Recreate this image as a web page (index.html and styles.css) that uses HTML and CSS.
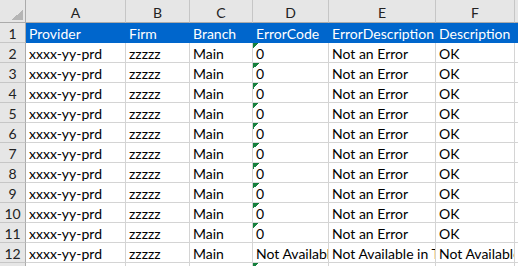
FILE: index.html
```html
<!DOCTYPE html>
<html>
<head>
<meta charset="utf-8">
<link rel="stylesheet" href="styles.css">
</head>
<body>
<div class="sheet">
  <div class="corner"></div>
  <div class="ch">A</div><div class="ch">B</div><div class="ch">C</div><div class="ch">D</div><div class="ch">E</div><div class="ch">F</div><div class="ch last"></div>

  <div class="rh">1</div>
  <div class="c hd">Provider</div><div class="c hd">Firm</div><div class="c hd">Branch</div><div class="c hd">ErrorCode</div><div class="c hd">ErrorDescription</div><div class="c hd">Description</div><div class="c hd last"></div>

  <div class="rh">2</div><div class="c">xxxx-yy-prd</div><div class="c">zzzzz</div><div class="c">Main</div><div class="c tri">0</div><div class="c">Not an Error</div><div class="c">OK</div><div class="c last"></div>
  <div class="rh">3</div><div class="c">xxxx-yy-prd</div><div class="c">zzzzz</div><div class="c">Main</div><div class="c tri">0</div><div class="c">Not an Error</div><div class="c">OK</div><div class="c last"></div>
  <div class="rh">4</div><div class="c">xxxx-yy-prd</div><div class="c">zzzzz</div><div class="c">Main</div><div class="c tri">0</div><div class="c">Not an Error</div><div class="c">OK</div><div class="c last"></div>
  <div class="rh">5</div><div class="c">xxxx-yy-prd</div><div class="c">zzzzz</div><div class="c">Main</div><div class="c tri">0</div><div class="c">Not an Error</div><div class="c">OK</div><div class="c last"></div>
  <div class="rh">6</div><div class="c">xxxx-yy-prd</div><div class="c">zzzzz</div><div class="c">Main</div><div class="c tri">0</div><div class="c">Not an Error</div><div class="c">OK</div><div class="c last"></div>
  <div class="rh">7</div><div class="c">xxxx-yy-prd</div><div class="c">zzzzz</div><div class="c">Main</div><div class="c tri">0</div><div class="c">Not an Error</div><div class="c">OK</div><div class="c last"></div>
  <div class="rh">8</div><div class="c">xxxx-yy-prd</div><div class="c">zzzzz</div><div class="c">Main</div><div class="c tri">0</div><div class="c">Not an Error</div><div class="c">OK</div><div class="c last"></div>
  <div class="rh">9</div><div class="c">xxxx-yy-prd</div><div class="c">zzzzz</div><div class="c">Main</div><div class="c tri">0</div><div class="c">Not an Error</div><div class="c">OK</div><div class="c last"></div>
  <div class="rh">10</div><div class="c">xxxx-yy-prd</div><div class="c">zzzzz</div><div class="c">Main</div><div class="c tri">0</div><div class="c">Not an Error</div><div class="c">OK</div><div class="c last"></div>
  <div class="rh">11</div><div class="c">xxxx-yy-prd</div><div class="c">zzzzz</div><div class="c">Main</div><div class="c tri">0</div><div class="c">Not an Error</div><div class="c">OK</div><div class="c last"></div>
  <div class="rh">12</div><div class="c">xxxx-yy-prd</div><div class="c">zzzzz</div><div class="c">Main</div><div class="c">Not Available</div><div class="c">Not Available in Table</div><div class="c">Not Available</div><div class="c last"></div>
  <div class="rh"></div><div class="c"></div><div class="c"></div><div class="c"></div><div class="c tri"></div><div class="c"></div><div class="c"></div><div class="c last"></div>
</div>
</body>
</html>
```

FILE: styles.css
```css
html, body {
  margin: 0;
  padding: 0;
  background: #ffffff;
}
.sheet {
  display: grid;
  grid-template-columns: 26px 100px 64px 63px 76px 107px 79px 60px;
  grid-template-rows: 23px repeat(13, 20px);
  width: 518px;
  height: 266px;
  overflow: hidden;
  font-family: Lato, "Open Sans", sans-serif;
  font-size: 14px;
  color: #000000;
}
.sheet > div {
  box-sizing: border-box;
  white-space: nowrap;
  overflow: hidden;
}
.corner {
  background-color: #e6e6e6;
  border-right: 1px solid #ababab;
  border-bottom: 1px solid #ababab;
  background-image: linear-gradient(to top left, #b5b5b5 50%, transparent 50%);
  background-size: 12px 10px;
  background-repeat: no-repeat;
  background-position: right 2px bottom 2px;
}
.ch {
  background: #e6e6e6;
  border-right: 1px solid #c6c6c6;
  border-bottom: 1px solid #ababab;
  display: flex;
  align-items: center;
  justify-content: center;
  padding-top: 2px;
  color: #222222;
}
.rh {
  background: #e6e6e6;
  border-right: 1px solid #ababab;
  border-bottom: 1px solid #c6c6c6;
  display: flex;
  align-items: center;
  justify-content: center;
  padding-top: 1px;
  color: #222222;
}
.c {
  border-right: 1px solid #d4d4d4;
  border-bottom: 1px solid #d4d4d4;
  padding: 1px 0 0 3px;
  display: flex;
  align-items: center;
}
.c.hd {
  background: #0066cc;
  color: #ffffff;
  border-right-color: #0066cc;
  border-bottom-color: #0066cc;
}
.tri {
  background-image: linear-gradient(135deg, #15803d 50%, transparent 50%);
  background-size: 6px 6px;
  background-repeat: no-repeat;
  background-position: 0 0;
}
```
